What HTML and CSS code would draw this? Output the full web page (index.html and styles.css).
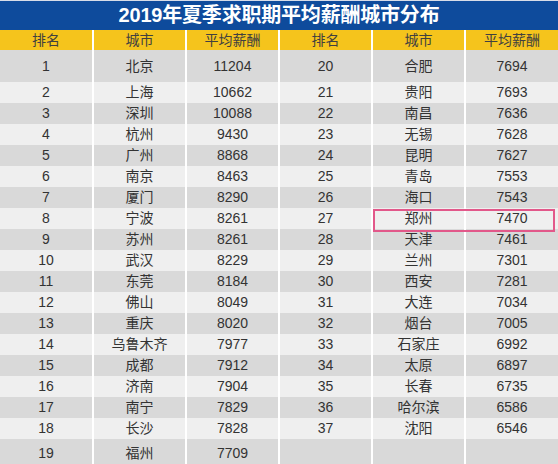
FILE: index.html
```html
<!DOCTYPE html>
<html lang="zh-CN">

<head>
  <meta charset="utf-8">
  <meta name="viewport" content="width=device-width, initial-scale=1">
  <title>2019年夏季求职期平均薪酬城市分布</title>
  <link rel="stylesheet" href="styles.css">
</head>

<body>
  <div class="board">
    <table class="salary">
      <thead>
        <tr class="title">
          <th colspan="6">2019年夏季求职期平均薪酬城市分布</th>
        </tr>
        <tr class="head">
          <th>排名</th><th>城市</th><th>平均薪酬</th>
          <th>排名</th><th>城市</th><th>平均薪酬</th>
        </tr>
      </thead>
      <tbody>
        <tr class="first"><td>1</td><td>北京</td><td>11204</td><td>20</td><td>合肥</td><td>7694</td></tr>
        <tr><td>2</td><td>上海</td><td>10662</td><td>21</td><td>贵阳</td><td>7693</td></tr>
        <tr><td>3</td><td>深圳</td><td>10088</td><td>22</td><td>南昌</td><td>7636</td></tr>
        <tr><td>4</td><td>杭州</td><td>9430</td><td>23</td><td>无锡</td><td>7628</td></tr>
        <tr><td>5</td><td>广州</td><td>8868</td><td>24</td><td>昆明</td><td>7627</td></tr>
        <tr><td>6</td><td>南京</td><td>8463</td><td>25</td><td>青岛</td><td>7553</td></tr>
        <tr><td>7</td><td>厦门</td><td>8290</td><td>26</td><td>海口</td><td>7543</td></tr>
        <tr><td>8</td><td>宁波</td><td>8261</td><td>27</td><td>郑州</td><td>7470</td></tr>
        <tr><td>9</td><td>苏州</td><td>8261</td><td>28</td><td>天津</td><td>7461</td></tr>
        <tr><td>10</td><td>武汉</td><td>8229</td><td>29</td><td>兰州</td><td>7301</td></tr>
        <tr><td>11</td><td>东莞</td><td>8184</td><td>30</td><td>西安</td><td>7281</td></tr>
        <tr><td>12</td><td>佛山</td><td>8049</td><td>31</td><td>大连</td><td>7034</td></tr>
        <tr><td>13</td><td>重庆</td><td>8020</td><td>32</td><td>烟台</td><td>7005</td></tr>
        <tr><td>14</td><td>乌鲁木齐</td><td>7977</td><td>33</td><td>石家庄</td><td>6992</td></tr>
        <tr><td>15</td><td>成都</td><td>7912</td><td>34</td><td>太原</td><td>6897</td></tr>
        <tr><td>16</td><td>济南</td><td>7904</td><td>35</td><td>长春</td><td>6735</td></tr>
        <tr><td>17</td><td>南宁</td><td>7829</td><td>36</td><td>哈尔滨</td><td>6586</td></tr>
        <tr><td>18</td><td>长沙</td><td>7828</td><td>37</td><td>沈阳</td><td>6546</td></tr>
        <tr class="last"><td>19</td><td>福州</td><td>7709</td><td></td><td></td><td></td></tr>
      </tbody>
    </table>
    <div class="mark"></div>
  </div>
</body>

</html>
```

FILE: styles.css
```css
* {
  margin: 0;
  padding: 0;
  box-sizing: border-box;
}

html,
body {
  width: 100%;
  height: 100%;
  overflow: hidden;
  background-color: #fff;
}

.board {
  position: relative;
  width: 558px;
}

.salary {
  width: 558px;
  border-collapse: collapse;
  table-layout: fixed;
  font-family: "Liberation Sans", "Noto Sans CJK SC", sans-serif;
  font-size: 14px;
  color: #333;
  text-align: center;
}

.salary th,
.salary td {
  border-left: 2px solid #fff;
  padding: 0;
  font-weight: normal;
  line-height: 1;
}

.salary th:first-child,
.salary td:first-child {
  border-left: none;
}

.title th {
  height: 29px;
  background-color: #0e4b9c;
  border-top: 1px solid #d8dde8;
  color: #fff;
  font-size: 20px;
  font-weight: bold;
  letter-spacing: -0.2px;
}

.head th {
  height: 20px;
  background-color: #f5c41c;
  color: #404040;
}

.salary tbody tr {
  height: 21px;
}

.salary tbody tr:nth-child(odd) {
  background-color: #d9d9d9;
}

.salary tbody tr:nth-child(even) {
  background-color: #efefef;
}

.salary tbody tr.first {
  height: 32px;
}

.salary tbody tr.last {
  height: 28px;
}

.mark {
  position: absolute;
  left: 373px;
  top: 209px;
  width: 182px;
  height: 23px;
  border: 2px solid #e2588a;
}
```
